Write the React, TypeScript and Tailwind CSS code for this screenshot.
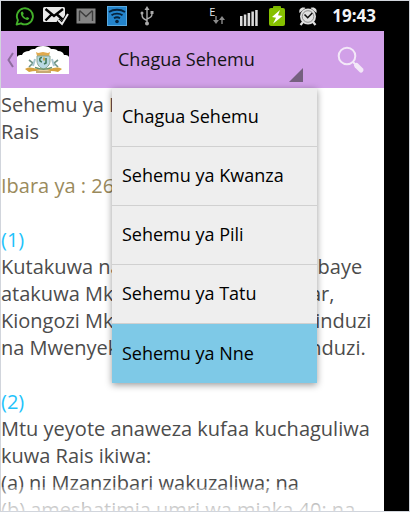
import { useState } from "react";
import { clsx } from "clsx";

const sections = [
  "Chagua Sehemu",
  "Sehemu ya Kwanza",
  "Sehemu ya Pili",
  "Sehemu ya Tatu",
  "Sehemu ya Nne",
];

function WhatsAppIcon() {
  return (
    <svg viewBox="0 0 20 20" className="w-5 h-5" fill="none">
      <path d="M1.6 18.6l1.3-4.4A8 8 0 1 1 6 17.3z" stroke="#43b02a" strokeWidth="1.9" strokeLinejoin="round" />
      <path
        d="M7.3 5.4c-.5-.1-1.6.8-1.5 2.2.2 3 3.3 6 6.2 6.3 1.3.1 2.3-.8 2.2-1.6-.1-.5-1.7-1.3-2.2-1.3-.4 0-.7.9-1.1.9-.7 0-2.9-2-3-2.9 0-.4.8-.6.8-1.1 0-.6-.8-2.4-1.4-2.5z"
        fill="#43b02a"
      />
    </svg>
  );
}

function MailCheckIcon() {
  return (
    <svg viewBox="0 0 28 20" className="w-7 h-5" fill="none">
      <rect x="1" y="1" width="22" height="15" rx="1.5" fill="#e8e8e8" />
      <path d="M3.5 3l8.5 7 9-7M3.5 14.5l6-6M20.5 13.5l-6-5.5" stroke="#000" strokeWidth="2.4" />
      <path d="M16 14l4 4 6-10" stroke="#000" strokeWidth="4" />
      <path d="M16 14l4 4 6-10" stroke="#e8e8e8" strokeWidth="2" />
    </svg>
  );
}

function GmailIcon() {
  return (
    <svg viewBox="0 0 20 16" className="w-5 h-4" fill="none">
      <rect x="0.5" y="0.5" width="19" height="15" fill="#858585" />
      <path d="M3.5 2.5l6.500 6 6.500-6M3.500 3v10" stroke="#3c3c3c" strokeWidth="1.4" />
      <path d="M16.500 3v10" stroke="#3c3c3c" strokeWidth="1.4" />
    </svg>
  );
}

function WifiIcon() {
  return (
    <svg viewBox="0 0 20 20" className="w-5 h-5" fill="none">
      <rect x="0.5" y="0.5" width="19" height="19" fill="#2384cc" stroke="#5aaae0" />
      <path d="M2 6c4.5-3 11.5-3 16 0M4.5 9.300c3-2.200 8-2.200 11 0M7 12.300c1.700-1.200 4.300-1.200 6 0" stroke="#06223c" strokeWidth="1.8" />
      <circle cx="10" cy="15.5" r="1.8" fill="#06223c" />
    </svg>
  );
}

function UsbIcon() {
  return (
    <svg viewBox="0 0 14 20" className="w-[14px] h-5" fill="none" stroke="#aaa" strokeWidth="1.4">
      <path d="M7 3v14M7 14.500c-4-2-5-2.500-5-6.500M7 13c4-1.800 5-2.500 5-5.500" />
      <path d="M7 0l2.500 4h-5z" fill="#aaa" stroke="none" />
      <circle cx="2" cy="7" r="1.5" fill="#aaa" stroke="none" />
      <rect x="10.5" y="5" width="3" height="3" fill="#aaa" stroke="none" />
      <circle cx="7" cy="17.5" r="2" fill="#aaa" stroke="none" />
    </svg>
  );
}

function EdgeIndicator() {
  return (
    <div className="flex w-[18px] h-5">
      <span className="text-[11px] leading-3 text-gray-200">E</span>
      <svg viewBox="0 0 12 8" className="w-3 h-2 self-end mb-[2px] -ml-[2px]" fill="#8a8a8a">
        <path d="M2.300 0h1.400v4H6L3 8 0 4h2.300zM8.300 8h1.400V4H12L9 0 6 4h2.300z" />
      </svg>
    </div>
  );
}

function SignalIcon() {
  return (
    <svg viewBox="0 0 18 18" className="w-[18px] h-[18px]" fill="#dcdcdc">
      <rect x="0" y="7" width="2.5" height="10" />
      <rect x="3.8" y="5.5" width="2.5" height="11.5" />
      <rect x="7.6" y="4" width="2.5" height="13" />
      <rect x="11.4" y="2.5" width="2.5" height="14.5" />
      <rect x="15.2" y="1" width="2.5" height="16" />
    </svg>
  );
}

function BatteryIcon() {
  return (
    <svg viewBox="0 0 16 20" className="w-4 h-5">
      <rect x="4" y="0" width="8" height="4" rx="1" fill="#7cb600" />
      <rect x="0" y="2" width="16" height="18" rx="2" fill="#86c000" />
      <path d="M11 4L3 11l4 .8-3 6L13.500 10l-4.500-.8z" fill="#fff" />
    </svg>
  );
}

function AlarmIcon() {
  return (
    <svg viewBox="0 0 20 20" className="w-5 h-5" fill="none">
      <path d="M1.500 7c-1-4 2-6.500 6-5zM18.500 7c1-4-2-6.500-6-5z" fill="#e0e0e0" />
      <path d="M5 16l-2.500 3M15 16l2.500 3" stroke="#e0e0e0" strokeWidth="2.2" />
      <circle cx="10" cy="10.5" r="8" fill="#e0e0e0" />
      <circle cx="10" cy="10.5" r="5.8" stroke="#777" strokeWidth="0.8" />
      <path d="M6.500 8.500l3.200 3.200 4.600-4.700" stroke="#111" strokeWidth="1.6" />
    </svg>
  );
}

function Crest() {
  return (
    <svg viewBox="0 0 52 28" className="w-[52px] h-7" fill="none">
      <rect width="52" height="28" fill="#000" />
      <path d="M0 28V11c1-2 3-2 5-2 1-3 4-4 7-4 2-2 4-2 6-2 2-4 14-4 16 0 3 0 5 0 7 2 3 0 5 1 6 4 2 0 4 0 5 2v17z" fill="#fff" />
      <path d="M19 6l2 1 5-1 5 1 2-1-1 4H20z" fill="#e0a94e" />
      <path d="M20 10h13v5c0 4-3 7-6.500 8-3.500-1-6.500-4-6.500-8z" fill="#b9d9e2" stroke="#8aa893" />
      <path d="M25 11.500c-3 0-3 4 0 4.500M29 12v5l-2 1" stroke="#3f7a5c" strokeWidth="1.6" />
      <path d="M26 11.500h2v3h-2z" fill="#c7a94f" />
      <path d="M12 14l4 3-4 4M41 14l-4 3 4 4" stroke="#6f9485" strokeWidth="1.6" />
      <path d="M18 13l-2 7M35 13l2 7" stroke="#a9c6cf" strokeWidth="2" />
      <path d="M8 23c5-3 8-1 12 0 4 1 9 1 13 0 4-1 7-3 12 0l-4 3c-9-2-20-2-29 0z" fill="#d6a23f" />
      <path d="M18 21.500c5 2 12 2 17 0" stroke="#6d9268" strokeWidth="1.5" />
      <path d="M19 26h15" stroke="#b58d45" strokeWidth="1.5" />
    </svg>
  );
}

function StatusBar() {
  return (
    <div className="flex items-center justify-between h-[30px] shrink-0 pl-[14px] pr-[33px] pb-px bg-black">
      <div className="flex items-center">
        <WhatsAppIcon />
        <div className="ml-[7px]"><MailCheckIcon /></div>
        <div className="ml-[6px]"><GmailIcon /></div>
        <div className="ml-[11px]"><WifiIcon /></div>
        <div className="ml-[13px]"><UsbIcon /></div>
      </div>
      <div className="flex items-center">
        <EdgeIndicator />
        <div className="ml-[13px] mt-1"><SignalIcon /></div>
        <div className="ml-[11px]"><BatteryIcon /></div>
        <div className="ml-[13px]"><AlarmIcon /></div>
        <span className="ml-[14px] text-[17px] leading-6 font-bold text-gray-100">19:43</span>
      </div>
    </div>
  );
}

export default function App() {
  const [open, setOpen] = useState(true);
  const [active, setActive] = useState(4);

  return (
    <div className="h-screen overflow-hidden flex flex-col bg-black border border-gray-300 font-['Open_Sans','Noto_Sans',sans-serif]">
      <StatusBar />

      <div className="flex-1 min-h-0 flex flex-col mr-[25px] bg-white">
        <header className="relative z-10 flex items-center h-[57px] shrink-0 bg-[#d1a0e8]">
          <button aria-label="Rudi" className="flex items-center gap-[3px] pl-[5px]">
            <svg viewBox="0 0 8 16" className="w-2 h-4" fill="none">
              <path d="M7 1L2.500 8 7 15" stroke="#8d6b9d" strokeWidth="2" />
            </svg>
            <Crest />
          </button>

          <div className="relative ml-[43px] w-[205px] h-full">
            <button
              aria-haspopup="listbox"
              aria-expanded={open}
              onClick={() => setOpen(!open)}
              className="flex items-center w-[191px] h-full pl-[6px] pb-[2px] text-lg leading-6 text-[#141414]"
            >
              <span className="flex-1 text-left">Chagua Sehemu</span>
              <svg viewBox="0 0 14 14" className="w-[14px] h-[14px] self-end mb-1">
                <path d="M14 0v14H0z" fill="#75607f" />
              </svg>
            </button>
            {open && (
              <ul
                role="listbox"
                aria-label="Sehemu"
                className="absolute top-full left-0 w-full bg-[#eeeeee] shadow-[0_2px_7px_rgba(0,0,0,0.4)]"
              >
                {sections.map((name, idx) => (
                  <li
                    key={name}
                    role="option"
                    aria-selected={idx === active}
                    onClick={() => {
                      setActive(idx);
                      setOpen(false);
                    }}
                    className={clsx(
                      "flex items-center h-[59px] pl-[10px] pb-[2px] text-lg leading-6 text-black cursor-pointer",
                      idx === active ? "bg-[#7ec9e7]" : "border-b border-[#d0d0d0]"
                    )}
                  >
                    {name}
                  </li>
                ))}
              </ul>
            )}
          </div>

          <button aria-label="Tafuta" className="ml-[20px]">
            <svg viewBox="0 0 28 28" className="w-7 h-7" fill="none">
              <circle cx="10" cy="10" r="8.3" stroke="#f3e8f8" strokeWidth="2" />
              <path d="M16 16l3 3" stroke="#f3e8f8" strokeWidth="2" />
              <path d="M19.5 19.5l4.5 4.5" stroke="#f3e8f8" strokeWidth="5" strokeLinecap="round" />
            </svg>
          </button>
        </header>

        <main className="relative flex-1 min-h-0 overflow-hidden pt-[3px] text-xl leading-[27px] text-[#4c4c4c] whitespace-nowrap">
          <p>Sehemu ya Kwanza</p>
          <p>Rais</p>
          <p className="mt-[27px] text-[#9a8a5c]">Ibara ya : 26</p>
          <h2 className="mt-[27px] text-[#1fc3fb]">(1)</h2>
          <p>
            Kutakuwa na Rais wa Zanzibar ambaye
            <br />
            atakuwa Mkuu wa Nchi ya Zanzibar,
            <br />
            Kiongozi Mkuu wa Serikali ya Mapinduzi
            <br />
            na Mwenyekiti wa Baraza la Mapinduzi.
          </p>
          <h2 className="mt-[27px] text-[#1fc3fb]">(2)</h2>
          <p>
            Mtu yeyote anaweza kufaa kuchaguliwa
            <br />
            kuwa Rais ikiwa:
            <br />
            (a) ni Mzanzibari wakuzaliwa; na
            <br />
            (b) ameshatimia umri wa miaka 40; na
          </p>
          <div className="absolute inset-x-0 bottom-0 h-6 bg-linear-to-t from-white/80 to-white/30" />
        </main>
      </div>
    </div>
  );
}
